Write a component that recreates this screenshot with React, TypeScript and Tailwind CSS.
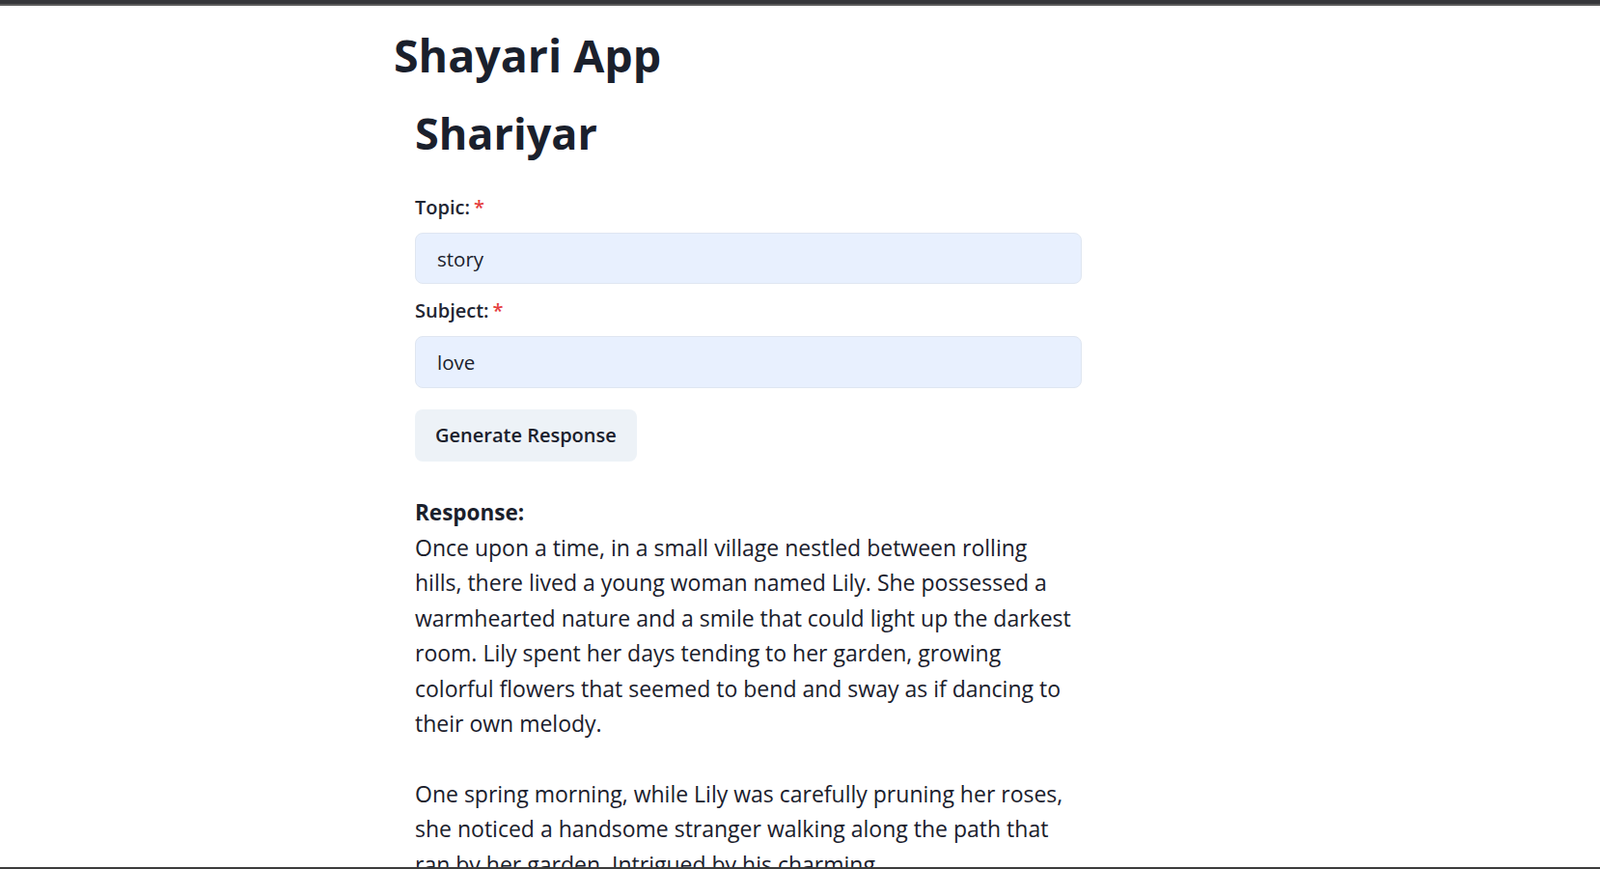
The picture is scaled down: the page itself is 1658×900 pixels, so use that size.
import { useState } from "react";

const response = `Once upon a time, in a small village nestled between rolling
hills, there lived a young woman named Lily. She possessed a
warmhearted nature and a smile that could light up the darkest
room. Lily spent her days tending to her garden, growing
colorful flowers that seemed to bend and sway as if dancing to
their own melody.

One spring morning, while Lily was carefully pruning her roses,
she noticed a handsome stranger walking along the path that
ran by her garden. Intrigued by his charming`;

export default function App() {
  const [topic, setTopic] = useState("story");
  const [subject, setSubject] = useState("love");

  return (
    <div
      className="h-screen overflow-hidden bg-white text-[#1a202c]"
      style={{ fontFamily: '"Open Sans", "Noto Sans", sans-serif' }}
    >
      {/* browser chrome strip */}
      <div className="h-[4px] bg-[#35363a]" />
      <div className="h-[2px] bg-[#5b5b5b]" />

      <main className="mx-auto w-[842px]">
        <h1 className="mt-[24px] text-[46.5px] leading-[54px] font-bold">Shayari App</h1>

        <div className="pl-[22px] w-[713px]">
          <h2 className="mt-[27px] text-[45px] leading-[54px] font-bold">Shariyar</h2>

          <form className="mt-[35px]" onSubmit={(e) => e.preventDefault()}>
            <label className="block text-[20px] leading-[30px] font-semibold text-[#1f2633]">
              Topic:<span className="ml-1 text-[#e53e3e]">*</span>
            </label>
            <input
              value={topic}
              onChange={(e) => setTopic(e.target.value)}
              className="mt-[11px] block w-full h-[53px] rounded-lg border border-[#dfe6f1] bg-[#e8f0fe] px-[22px] text-[20.5px] outline-none"
            />

            <label className="mt-[13px] block text-[20px] leading-[30px] font-semibold text-[#1f2633]">
              Subject:<span className="ml-1 text-[#e53e3e]">*</span>
            </label>
            <input
              value={subject}
              onChange={(e) => setSubject(e.target.value)}
              className="mt-[11px] block w-full h-[54px] rounded-lg border border-[#dfe6f1] bg-[#e8f0fe] px-[22px] text-[20.5px] outline-none"
            />

            <button
              type="submit"
              className="mt-[22px] h-[54px] rounded-lg bg-[#edf2f7] px-[21px] text-[20px] font-semibold"
            >
              Generate Response
            </button>
          </form>

          <div className="mt-[34.5px] text-[23px] leading-[36.4px]">
            <p className="text-[22.5px] font-bold">Response:</p>
            <p className="whitespace-pre">{response}</p>
          </div>
        </div>
      </main>

      <div className="fixed bottom-0 left-0 right-0 h-[2px] bg-[#3c3c3c]" />
    </div>
  );
}
